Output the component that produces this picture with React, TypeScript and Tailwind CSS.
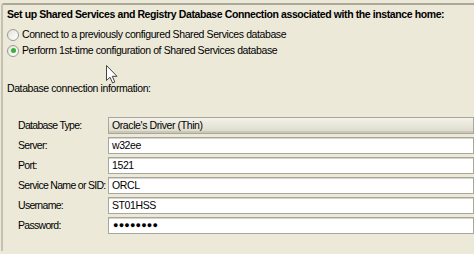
const fields = [
  { label: 'Server:', value: 'w32ee' },
  { label: 'Port:', value: '1521' },
  { label: 'Service Name or SID:', value: 'ORCL' },
  { label: 'Username:', value: 'ST01HSS' },
]

function Radio({ checked }: { checked?: boolean }) {
  return (
    <span className="flex h-[12px] w-[12px] items-center justify-center rounded-full border border-[#9a9a94] bg-gradient-to-br from-[#e4e3dc] to-white">
      {checked && <span className="h-[5px] w-[5px] rounded-full bg-[#3cae3c]" />}
    </span>
  )
}

function Cursor() {
  return (
    <svg
      className="absolute left-[103px] top-[8px]"
      width="13"
      height="19"
      viewBox="0 0 13 19"
    >
      <path
        d="M0.5 0.5 L0.5 15.5 L4 12.2 L6.6 18 L8.8 17 L6.3 11.3 L11 11.3 Z"
        fill="white"
        stroke="#444"
        strokeWidth="1"
        strokeLinejoin="round"
      />
    </svg>
  )
}

export default function App() {
  return (
    <div
      className="h-[254px] w-[474px] overflow-hidden bg-[#ece9d8] pl-[1px] pt-[3px] text-[10.5px] leading-[13px] tracking-[-0.4px] text-black"
      style={{ fontFamily: '"Liberation Sans", Arial, sans-serif' }}
    >
      <div className="h-[248px] rounded-tl-[3px] border-l-2 border-t-2 border-l-[#c4c1b2] border-t-[#aca899]">
        <div className="whitespace-nowrap pl-[4px] pt-[3px] text-[10.5px] font-bold tracking-[-0.4px]">
          Set up Shared Services and Registry Database Connection associated with the instance home:
        </div>

        <div className="mt-[7px] flex flex-col gap-[3px] pl-[4px]">
          <label className="flex h-[13px] items-center gap-[3px]">
            <Radio />
            <span>Connect to a previously configured Shared Services database</span>
          </label>
          <label className="flex h-[13px] items-center gap-[3px]">
            <Radio checked />
            <span>Perform 1st-time configuration of Shared Services database</span>
          </label>
        </div>

        <div className="relative h-[25px]">
          <Cursor />
        </div>

        <div className="pl-[4px]">Database connection information:</div>

        <div className="mt-[22px] flex flex-col gap-[3px]">
          <div className="flex h-[17px] items-center">
            <span className="w-[105px] whitespace-nowrap pl-[15px] tracking-[-0.7px]">Database Type:</span>
            <div className="flex h-[17px] flex-1 items-center border border-[#a9a79c] bg-gradient-to-b from-[#f4f2ea] to-[#dcd9ca] pl-[3px] shadow-[inset_0_-2px_0_#cbc8b9]">
              Oracle's Driver (Thin)
            </div>
          </div>
          {fields.map((f) => (
            <div key={f.label} className="flex h-[17px] items-center">
              <span className="w-[105px] whitespace-nowrap pl-[15px] tracking-[-0.7px]">{f.label}</span>
              <div className="flex h-[17px] flex-1 items-center border border-[#a9a79c] bg-white pl-[3px] shadow-[inset_0_1px_0_#d8d6cc]">
                {f.value}
              </div>
            </div>
          ))}
          <div className="flex h-[17px] items-center">
            <span className="w-[105px] whitespace-nowrap pl-[15px] tracking-[-0.7px]">Password:</span>
            <div className="flex h-[17px] flex-1 items-center border border-[#a9a79c] bg-white pl-[4px] text-[9px] tracking-[0.2px] shadow-[inset_0_1px_0_#d8d6cc]">
              ●●●●●●●●
            </div>
          </div>
        </div>
      </div>
    </div>
  )
}
